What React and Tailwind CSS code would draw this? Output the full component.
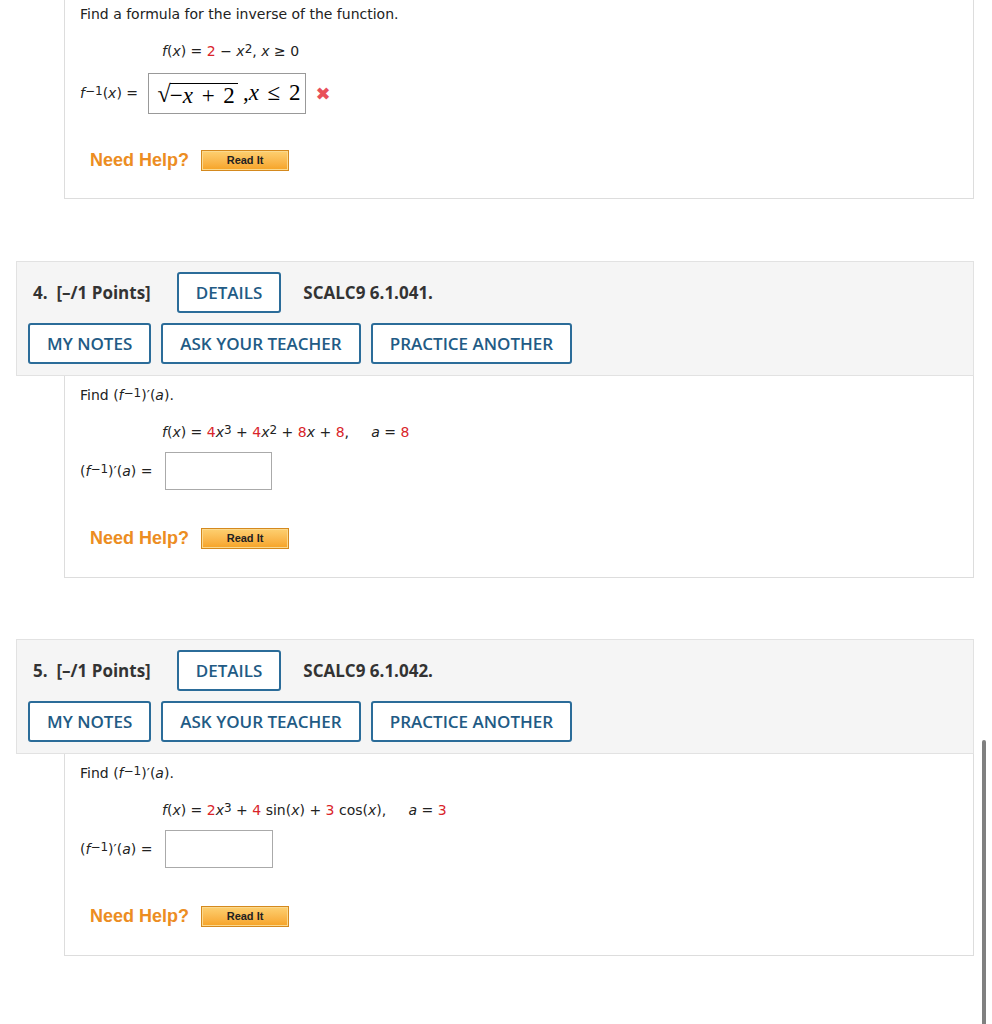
import React from 'react';

const body = { fontFamily: '"DejaVu Sans", Verdana, sans-serif' };
const open = { fontFamily: '"Open Sans", "Liberation Sans", sans-serif' };
const arial = { fontFamily: '"Liberation Sans", Arial, sans-serif' };
const serif = { fontFamily: '"Liberation Serif", "Times New Roman", serif' };

const R = ({ children }) => <span className="text-[#d9242a]">{children}</span>;
const I = ({ children }) => <i>{children}</i>;
const Sup = ({ children }) => <sup className="text-[12px] relative -top-[3px]">{children}</sup>;

const FInvPrime = () => (
    <span>
        (<I>f</I>
        <Sup>−1</Sup>)′(<I>a</I>)
    </span>
);

const NeedHelp = () => (
    <div className="flex items-center gap-[12px] pl-[10px]">
        <span className="text-[18px] font-bold text-[#ec8d22]" style={arial}>
            Need Help?
        </span>
        <button
            className="w-[88px] h-[21px] border border-[#d4891e] bg-gradient-to-b from-[#fdd070] to-[#f6a323] shadow-[inset_0_0_0_1px_#fbd98e] text-[11px] font-bold text-[#222] leading-none"
            style={arial}
        >
            Read It
        </button>
    </div>
);

const OutlineBtn = ({ children }) => (
    <button
        className="h-[41px] px-[17px] border-2 border-[#2b6c99] rounded-[3px] bg-white text-[17px] font-semibold text-[#225b85]"
        style={open}
    >
        {children}
    </button>
);

const Header = ({ num, code }) => (
    <div className="bg-[#f5f5f5] border border-[#e2e2e2] pl-[11px] pt-[10px] pb-[11px] flex flex-col gap-[10px]">
        <div className="flex items-center">
            <span className="pl-[5px] text-[17px] font-bold text-[#333] mr-[26px] whitespace-pre" style={open}>
                {num}.  [–/1 Points]
            </span>
            <OutlineBtn>DETAILS</OutlineBtn>
            <span className="ml-[22px] text-[17px] font-bold text-[#333]" style={open}>
                {code}
            </span>
        </div>
        <div className="flex items-center gap-[10px]">
            <OutlineBtn>MY NOTES</OutlineBtn>
            <OutlineBtn>ASK YOUR TEACHER</OutlineBtn>
            <OutlineBtn>PRACTICE ANOTHER</OutlineBtn>
        </div>
    </div>
);

const Question = ({ num, code, fx, boxW }) => (
    <div>
        <Header num={num} code={code} />
        <div className="ml-[48px] border border-t-0 border-[#dddddd] pl-[15px] pt-[10px] pb-[25px] text-[14px] text-[#222]" style={body}>
            <div className="h-[19px] flex items-center">
                Find&nbsp;<FInvPrime />.
            </div>
            <div className="pl-[82px] mt-[18px] h-[19px] flex items-center whitespace-pre">{fx}</div>
            <div className="flex items-center mt-[10px]">
                <span className="whitespace-pre">
                    <FInvPrime /> ={' '}
                </span>
                <div className={`ml-[8px] h-[38px] ${boxW} border border-[#aaaaaa] bg-white`} />
            </div>
            <div className="mt-[35px]">
                <NeedHelp />
            </div>
        </div>
    </div>
);

export default function App() {
    return (
        <div className="relative w-[992px] h-[1024px] bg-white overflow-hidden">
            <div className="w-[958px] ml-[16px]">
                {/* previous question tail */}
                <div className="ml-[48px] h-[199px] border border-t-0 border-[#dddddd] pl-[15px] text-[14px] text-[#222]" style={body}>
                    <div className="pt-[5px] h-[19px] flex items-center box-content">Find a formula for the inverse of the function.</div>
                    <div className="pl-[82px] mt-[18px] h-[19px] flex items-center whitespace-pre">
                        <I>f</I>(<I>x</I>) = <R>2</R> − <I>x</I>
                        <Sup>2</Sup>, <I>x</I> ≥ 0
                    </div>
                    <div className="flex items-center mt-[12px]">
                        <span className="whitespace-pre">
                            <I>f</I>
                            <Sup>−1</Sup>(<I>x</I>) ={' '}
                        </span>
                        <div className="ml-[5px] w-[158px] h-[41px] border border-[#999999] flex items-center pl-[9px] text-[23px] text-black whitespace-pre [word-spacing:3px]" style={serif}>
                            <span className="text-[24px] -mr-[1px]">√</span>
                            <span className="border-t border-black leading-[23px] pr-[3px] mt-[2px]">
                                −<I>x</I> + 2
                            </span>
                            <span className="ml-[5px]">
                                ,<I>x</I> ≤ 2
                            </span>
                        </div>
                        <span className="ml-[10px] text-[18px] text-[#e8505b]">✖</span>
                    </div>
                    <div className="mt-[33px]">
                        <NeedHelp />
                    </div>
                </div>

                <div className="mt-[62px]">
                    <Question
                        num={4}
                        code="SCALC9 6.1.041."
                        boxW="w-[107px]"
                        fx={
                            <>
                                <I>f</I>(<I>x</I>) = <R>4</R><I>x</I>
                                <Sup>3</Sup> + <R>4</R><I>x</I>
                                <Sup>2</Sup> + <R>8</R><I>x</I> + <R>8</R>,{'     '}<I>a</I> = <R>8</R>
                            </>
                        }
                    />
                </div>

                <div className="mt-[61px]">
                    <Question
                        num={5}
                        code="SCALC9 6.1.042."
                        boxW="w-[108px]"
                        fx={
                            <>
                                <I>f</I>(<I>x</I>) = <R>2</R><I>x</I>
                                <Sup>3</Sup> + <R>4</R> sin(<I>x</I>) + <R>3</R> cos(<I>x</I>),{'     '}<I>a</I> = <R>3</R>
                            </>
                        }
                    />
                </div>
            </div>

            {/* overlay scrollbar */}
            <div className="absolute left-[982px] top-[740px] w-[4px] h-[284px] bg-[#808080] rounded-t-[2px]" />
        </div>
    );
}
